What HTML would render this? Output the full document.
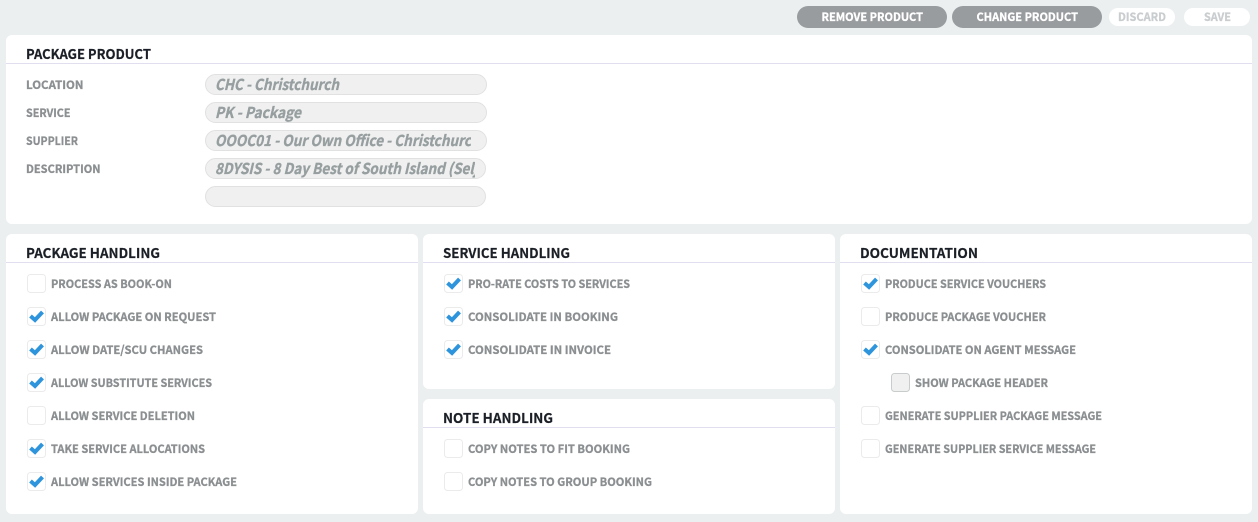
<!DOCTYPE html>
<html><head><meta charset="utf-8"><style>
html,body{margin:0;padding:0;width:1258px;height:522px;overflow:hidden;background:#ebeff0}
svg{display:block}
text{font-family:"Noto Sans CJK JP","Liberation Sans",sans-serif;font-weight:700}
.t{font-size:13.5px;fill:#1b1f26;stroke:#1b1f26;stroke-width:.2px}
.l{font-size:11.5px;fill:#8b8f91;stroke:#8b8f91;stroke-width:.3px}
.i{font-size:15px;fill:#969e9f;stroke:#969e9f;stroke-width:.35px;font-style:italic}
.b{font-size:11.5px;fill:#fff;stroke:#fff;stroke-width:.3px}
.d{font-size:11.5px;fill:#c9cdcf;stroke:#c9cdcf;stroke-width:.3px}
.p{fill:#fff}
.ln{stroke:#e0deef;stroke-width:1}
.f{fill:#f0f0f0;stroke:#e1e1e1;stroke-width:1}
.c{fill:#fff;stroke:#ebebeb;stroke-width:1}
.k{fill:none;stroke:#2e94dc;stroke-width:4;transform:translateX(-.5px)}
</style></head><body>
<svg width="1258" height="522" viewBox="0 0 1258 522" xmlns="http://www.w3.org/2000/svg">
<defs>
<clipPath id="c1"><rect x="210" y="130" width="261" height="22"/></clipPath>
<clipPath id="c2"><rect x="210" y="158" width="265" height="22"/></clipPath>
</defs>
<rect x="797" y="6" width="150" height="22" rx="11" fill="#999c9f"/>
<rect x="952" y="6" width="150" height="22" rx="11" fill="#999c9f"/>
<rect x="1109" y="8" width="66" height="18" rx="9" fill="#fff"/>
<rect x="1184" y="8" width="66" height="18" rx="9" fill="#fff"/>
<text class="b" x="821.500" y="21" textLength="101.500" lengthAdjust="spacingAndGlyphs">REMOVE PRODUCT</text>
<text class="b" x="976.500" y="21" textLength="101.500" lengthAdjust="spacingAndGlyphs">CHANGE PRODUCT</text>
<text class="d" x="1118" y="21" textLength="48" lengthAdjust="spacingAndGlyphs">DISCARD</text>
<text class="d" x="1204" y="21" textLength="27" lengthAdjust="spacingAndGlyphs">SAVE</text>

<rect class="p" x="6" y="35" width="1246" height="189" rx="6"/>
<rect class="p" x="6" y="234" width="412" height="280" rx="6"/>
<rect class="p" x="423" y="234" width="412" height="155" rx="6"/>
<rect class="p" x="423" y="399" width="412" height="115" rx="6"/>
<rect class="p" x="840" y="234" width="412" height="280" rx="6"/>
<line class="ln" x1="6" x2="1252" y1="63.5" y2="63.5"/>
<line class="ln" x1="6" x2="418" y1="262.5" y2="262.5"/>
<line class="ln" x1="423" x2="835" y1="262.5" y2="262.5"/>
<line class="ln" x1="423" x2="835" y1="427.5" y2="427.5"/>
<line class="ln" x1="840" x2="1252" y1="262.5" y2="262.5"/>

<text class="t" x="26" y="59" textLength="125" lengthAdjust="spacingAndGlyphs">PACKAGE PRODUCT</text>
<text class="t" x="26" y="258" textLength="134" lengthAdjust="spacingAndGlyphs">PACKAGE HANDLING</text>
<text class="t" x="443" y="258" textLength="127" lengthAdjust="spacingAndGlyphs">SERVICE HANDLING</text>
<text class="t" x="443" y="423" textLength="110" lengthAdjust="spacingAndGlyphs">NOTE HANDLING</text>
<text class="t" x="860" y="258" textLength="118" lengthAdjust="spacingAndGlyphs">DOCUMENTATION</text>

<text class="l" x="26" y="89" textLength="57.500" lengthAdjust="spacingAndGlyphs">LOCATION</text>
<text class="l" x="26" y="117" textLength="44.500" lengthAdjust="spacingAndGlyphs">SERVICE</text>
<text class="l" x="26" y="145" textLength="52" lengthAdjust="spacingAndGlyphs">SUPPLIER</text>
<text class="l" x="26" y="173" textLength="74.500" lengthAdjust="spacingAndGlyphs">DESCRIPTION</text>

<rect class="f" x="205.500" y="74.500" width="281" height="20" rx="10"/>
<rect class="f" x="205.500" y="102.500" width="281" height="20" rx="10"/>
<rect class="f" x="205.500" y="130.500" width="281" height="20" rx="10"/>
<rect class="f" x="205.500" y="158.500" width="280" height="20" rx="10"/>
<rect class="f" x="205.500" y="186.500" width="280" height="20" rx="10"/>
<text class="i" x="215" y="90" textLength="124" lengthAdjust="spacingAndGlyphs">CHC - Christchurch</text>
<text class="i" x="215" y="118" textLength="86" lengthAdjust="spacingAndGlyphs">PK - Package</text>
<g clip-path="url(#c1)"><text class="i" x="215" y="146" textLength="256" lengthAdjust="spacingAndGlyphs">OOOC01 - Our Own Office - Christchurc</text></g>
<g clip-path="url(#c2)"><text class="i" x="215" y="174" textLength="263" lengthAdjust="spacingAndGlyphs">8DYSIS - 8 Day Best of South Island (Selj</text></g>

<!-- Package handling -->
<rect class="c" x="27.500" y="274.500" width="18" height="18" rx="3"/>
<rect class="c" x="27.500" y="307.500" width="18" height="18" rx="3"/>
<rect class="c" x="27.500" y="340.500" width="18" height="18" rx="3"/>
<rect class="c" x="27.500" y="373.500" width="18" height="18" rx="3"/>
<rect class="c" x="27.500" y="406.500" width="18" height="18" rx="3"/>
<rect class="c" x="27.500" y="439.500" width="18" height="18" rx="3"/>
<rect class="c" x="27.500" y="472.500" width="18" height="18" rx="3"/>
<path class="k" d="M31 316l4.500 4 7.500-8"/>
<path class="k" d="M31 349l4.500 4 7.500-8"/>
<path class="k" d="M31 382l4.500 4 7.500-8"/>
<path class="k" d="M31 448l4.500 4 7.500-8"/>
<path class="k" d="M31 481l4.500 4 7.500-8"/>
<text class="l" x="51" y="288" textLength="121" lengthAdjust="spacingAndGlyphs">PROCESS AS BOOK-ON</text>
<text class="l" x="51" y="321" textLength="165" lengthAdjust="spacingAndGlyphs">ALLOW PACKAGE ON REQUEST</text>
<text class="l" x="51" y="354" textLength="152" lengthAdjust="spacingAndGlyphs">ALLOW DATE/SCU CHANGES</text>
<text class="l" x="51" y="387" textLength="161" lengthAdjust="spacingAndGlyphs">ALLOW SUBSTITUTE SERVICES</text>
<text class="l" x="51" y="420" textLength="144" lengthAdjust="spacingAndGlyphs">ALLOW SERVICE DELETION</text>
<text class="l" x="51" y="453" textLength="154" lengthAdjust="spacingAndGlyphs">TAKE SERVICE ALLOCATIONS</text>
<text class="l" x="51" y="486" textLength="186" lengthAdjust="spacingAndGlyphs">ALLOW SERVICES INSIDE PACKAGE</text>

<!-- Service handling -->
<rect class="c" x="444.500" y="274.500" width="18" height="18" rx="3"/>
<rect class="c" x="444.500" y="307.500" width="18" height="18" rx="3"/>
<rect class="c" x="444.500" y="340.500" width="18" height="18" rx="3"/>
<path class="k" d="M448 283l4.500 4 7.500-8"/>
<path class="k" d="M448 316l4.500 4 7.500-8"/>
<path class="k" d="M448 349l4.500 4 7.500-8"/>
<text class="l" x="468" y="288" textLength="162" lengthAdjust="spacingAndGlyphs">PRO-RATE COSTS TO SERVICES</text>
<text class="l" x="468" y="321" textLength="150" lengthAdjust="spacingAndGlyphs">CONSOLIDATE IN BOOKING</text>
<text class="l" x="468" y="354" textLength="143" lengthAdjust="spacingAndGlyphs">CONSOLIDATE IN INVOICE</text>

<!-- Note handling -->
<rect class="c" x="444.500" y="439.500" width="18" height="18" rx="3"/>
<rect class="c" x="444.500" y="472.500" width="18" height="18" rx="3"/>
<text class="l" x="468" y="453" textLength="162" lengthAdjust="spacingAndGlyphs">COPY NOTES TO FIT BOOKING</text>
<text class="l" x="468" y="486" textLength="184" lengthAdjust="spacingAndGlyphs">COPY NOTES TO GROUP BOOKING</text>

<!-- Documentation -->
<rect class="c" x="861.500" y="274.500" width="18" height="18" rx="3"/>
<rect class="c" x="861.500" y="307.500" width="18" height="18" rx="3"/>
<rect class="c" x="861.500" y="340.500" width="18" height="18" rx="3"/>
<rect x="891.500" y="373.500" width="18" height="18" rx="3" fill="#f0f0f0" stroke="#c9cccc"/>
<rect class="c" x="861.500" y="406.500" width="18" height="18" rx="3"/>
<rect class="c" x="861.500" y="439.500" width="18" height="18" rx="3"/>
<path class="k" d="M865 283l4.500 4 7.500-8"/>
<path class="k" d="M865 349l4.500 4 7.500-8"/>
<text class="l" x="885" y="288" textLength="161" lengthAdjust="spacingAndGlyphs">PRODUCE SERVICE VOUCHERS</text>
<text class="l" x="885" y="321" textLength="161" lengthAdjust="spacingAndGlyphs">PRODUCE PACKAGE VOUCHER</text>
<text class="l" x="885" y="354" textLength="191" lengthAdjust="spacingAndGlyphs">CONSOLIDATE ON AGENT MESSAGE</text>
<text class="l" x="915" y="387" textLength="133" lengthAdjust="spacingAndGlyphs">SHOW PACKAGE HEADER</text>
<text class="l" x="885" y="420" textLength="217" lengthAdjust="spacingAndGlyphs">GENERATE SUPPLIER PACKAGE MESSAGE</text>
<text class="l" x="885" y="453" textLength="211" lengthAdjust="spacingAndGlyphs">GENERATE SUPPLIER SERVICE MESSAGE</text>
</svg>
</body></html>
